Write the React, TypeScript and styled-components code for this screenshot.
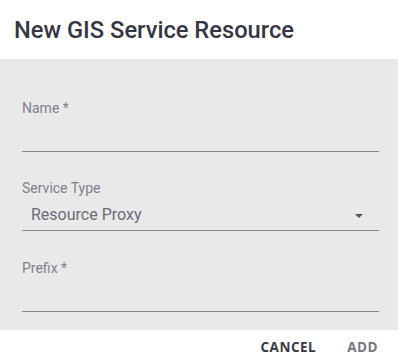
import React from 'react';
import styled, { createGlobalStyle } from 'styled-components';

const GlobalStyle = createGlobalStyle`
	html, body {
		margin: 0;
		padding: 0;
		background: #fff;
	}
	body {
		font-family: Roboto, 'Noto Sans', sans-serif;
	}
`;

const Dialog = styled.section`
	width: 398px;
	height: 364px;
	display: flex;
	flex-direction: column;
	background: #fff;
`;
const Title = styled.h2`
	margin: 0;
	height: 59px;
	padding: 0 14px;
	display: flex;
	align-items: center;
	font-size: 23.7px;
	font-weight: 500;
	color: #363642;
`;
const Body = styled.div`
	flex: 0 0 271px;
	display: flex;
	flex-direction: column;
	padding: 0 19px 0 22px;
	background-color: #e9e9e9;
`;
const Field = styled.div<{ $top: number }>`
	display: flex;
	flex-direction: column;
	margin-top: ${(p) => p.$top}px;
`;
const Label = styled.label`
	font-size: 14px;
	line-height: 16px;
	color: #80808a;
`;
const Input = styled.div`
	height: 27px;
	margin-top: 8px;
	border-bottom: 1px solid #8a8a94;
	display: flex;
	align-items: center;
`;
const Select = styled(Input)`
	height: 31px;
	margin-top: 3px;
	padding: 0 16px 0 9px;
	justify-content: space-between;
	font-size: 16px;
	color: #6b6b75;
`;
const Caret = styled.span`
	width: 0;
	height: 0;
	border-left: 4.5px solid transparent;
	border-right: 4.5px solid transparent;
	border-top: 4.5px solid #55555f;
	margin-top: 3px;
`;
const Actions = styled.div`
	flex: 1;
	display: flex;
	justify-content: flex-end;
	align-items: center;
	gap: 31px;
	padding-right: 20px;
`;
const Button = styled.button<{ $muted?: boolean }>`
	padding: 0;
	border: none;
	background: transparent;
	font-family: 'Open Sans', sans-serif;
	font-size: 13.5px;
	font-weight: 700;
	letter-spacing: 0.5px;
	color: ${(p) => (p.$muted ? '#77777f' : '#3a3a45')};
	cursor: pointer;
`;

const App = () => {
	return (
		<Dialog>
			<GlobalStyle />
			<Title>New GIS Service Resource</Title>
			<Body>
				<Field $top={41}>
					<Label>Name *</Label>
					<Input />
				</Field>
				<Field $top={28}>
					<Label>Service Type</Label>
					<Select>
						<span>Resource Proxy</span>
						<Caret />
					</Select>
				</Field>
				<Field $top={29}>
					<Label>Prefix *</Label>
					<Input />
				</Field>
			</Body>
			<Actions>
				<Button>CANCEL</Button>
				<Button $muted>ADD</Button>
			</Actions>
		</Dialog>
	);
};

export default App;
